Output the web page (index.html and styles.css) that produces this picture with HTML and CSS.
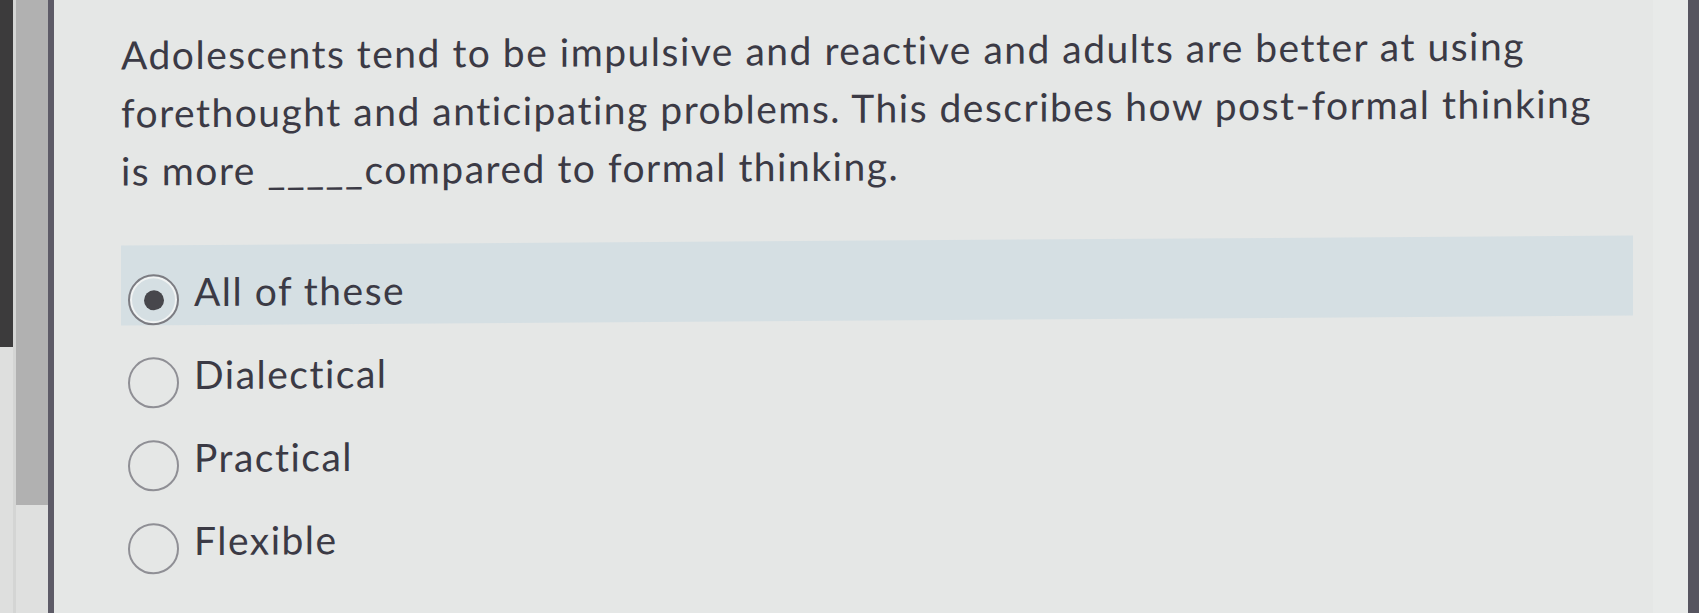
FILE: index.html
```html
<!DOCTYPE html>
<html lang="en">
<head>
<meta charset="utf-8">
<title>Quiz question</title>
<link rel="stylesheet" href="styles.css">
</head>
<body>
<div class="screen">
  <div class="sidebar">
    <div class="strip strip-dark"><div class="strip-top"></div></div>
    <div class="strip strip-gap"></div>
    <div class="strip strip-gray"><div class="strip-top"></div></div>
    <div class="divider"></div>
  </div>
  <main class="main">
    <p class="question">Adolescents tend to be impulsive and reactive and adults are better at using<br>forethought and anticipating problems. This describes how post-formal thinking<br>is more _____compared to formal thinking.</p>
    <ul class="options">
      <li class="option selected"><span class="radio"><span class="dot"></span></span><span class="label">All of these</span></li>
      <li class="option"><span class="radio"></span><span class="label">Dialectical</span></li>
      <li class="option"><span class="radio"></span><span class="label">Practical</span></li>
      <li class="option"><span class="radio"></span><span class="label">Flexible</span></li>
    </ul>
  </main>
  <div class="gutter"></div>
  <div class="edge"></div>
</div>
</body>
</html>
```
FILE: styles.css
```css
html, body {
  margin: 0;
  padding: 0;
}
body {
  width: 1699px;
  height: 613px;
  overflow: hidden;
  background: #e5e7e6;
  font-family: Lato, "Open Sans", sans-serif;
  color: #3b3a45;
}
.screen {
  display: flex;
  height: 613px;
}
.sidebar {
  display: flex;
  flex: 0 0 auto;
}
.strip {
  display: flex;
  flex-direction: column;
}
.strip-dark {
  width: 13px;
  background: #dedfde;
}
.strip-dark .strip-top {
  height: 347px;
  background: #3c3b3c;
}
.strip-gap {
  width: 3px;
  background: #d4d5d4;
}
.strip-gray {
  width: 32px;
  background: #dfe0df;
}
.strip-gray .strip-top {
  height: 505px;
  background: #b1b1b1;
}
.divider {
  width: 6px;
  background: #5d5b67;
}
.main {
  flex: 1 1 auto;
  padding: 26px 20px 0 67px;
  transform: skewY(-0.38deg);
  transform-origin: 0 0;
}
.question {
  margin: 0;
  font-size: 39px;
  line-height: 58px;
  letter-spacing: 1.5px;
  white-space: nowrap;
}
.options {
  list-style: none;
  margin: 46px 0 0;
  padding: 0;
  display: flex;
  flex-direction: column;
  gap: 3px;
}
.option {
  height: 80px;
  box-sizing: border-box;
  padding: 0 0 0 7px;
  display: flex;
  align-items: flex-start;
  gap: 15px;
  font-size: 39px;
  letter-spacing: 1.5px;
}
.option.selected {
  background: #d5dfe3;
}
.radio {
  margin-top: 29px;
  width: 47px;
  height: 47px;
  border: 2px solid #8f8f95;
  border-radius: 50%;
  display: flex;
  align-items: center;
  justify-content: center;
  flex: 0 0 auto;
}
.selected .radio {
  border-color: #7c7c82;
  box-shadow: inset 0 0 0 2px #f1f3f3;
}
.dot {
  width: 20px;
  height: 20px;
  border-radius: 50%;
  background: #47474c;
}
.label {
  margin-top: 21px;
  line-height: 50px;
}
.gutter {
  width: 35px;
  flex: 0 0 auto;
  background: #e8eae9;
}
.edge {
  width: 11px;
  flex: 0 0 auto;
  background: #56545f;
}
```
